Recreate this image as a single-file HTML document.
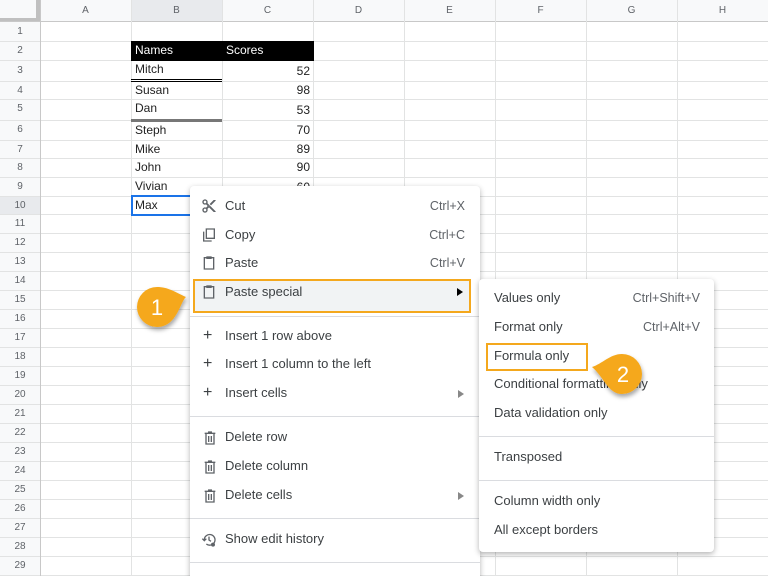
<!DOCTYPE html>
<html style="overflow:hidden;width:768px;height:576px"><head><meta charset="utf-8"><style>
*{margin:0;padding:0;box-sizing:border-box}
body{width:768px;height:576px;overflow:hidden;background:#fff;font-family:"Liberation Sans",Arial,sans-serif;position:relative}
.a{position:absolute}
.h{position:absolute;left:0;width:768px;height:1px;background:#e2e3e3}
.v{position:absolute;top:0;width:1px;height:576px;background:#e2e3e3}
.rh{position:absolute;left:0;width:40px;text-align:center;font-size:10px;color:#5f6368;height:19px;line-height:19px}
.ch{position:absolute;top:0;height:22px;line-height:22px;text-align:center;font-size:10px;color:#5f6368;width:91px}
.c{position:absolute;font-size:12px;color:#222;height:19px;line-height:19px}
.n{text-align:right;width:85px}
.m{position:absolute;background:#fff;box-shadow:0 2px 6px rgba(0,0,0,.3);border-radius:4px}
.it{position:absolute;font-size:13px;color:#3c4043;height:20px;line-height:20px}
.k{position:absolute;font-size:12.5px;color:#5f6368;text-align:right;height:20px;line-height:20px}
.sep{position:absolute;height:1px;background:#dadce0}
.ic{position:absolute;width:16px;height:16px}
</style></head><body>
<div class="a" style="left:0;top:0;width:768px;height:22px;background:#f8f9fa"></div>
<div class="a" style="left:0;top:0;width:40px;height:576px;background:#f8f9fa"></div>
<div class="a" style="left:131px;top:0;width:91px;height:22px;background:#e8eaed"></div>
<div class="a" style="left:0;top:196px;width:40px;height:18px;background:#e8eaed"></div>
<div class="a" style="left:0;top:0;width:40px;height:22px;background:#f8f9fa;border-right:4px solid #c0c0c0;border-bottom:4px solid #c0c0c0"></div>
<div class="h" style="top:21px;background:#c8c8c8"></div>
<div class="h" style="top:41px"></div><div class="h" style="top:60px"></div><div class="h" style="top:81px"></div><div class="h" style="top:99px"></div><div class="h" style="top:120px"></div><div class="h" style="top:140px"></div><div class="h" style="top:158px"></div><div class="h" style="top:177px"></div><div class="h" style="top:196px"></div><div class="h" style="top:214px"></div><div class="h" style="top:233px"></div><div class="h" style="top:252px"></div><div class="h" style="top:271px"></div><div class="h" style="top:290px"></div><div class="h" style="top:309px"></div><div class="h" style="top:328px"></div><div class="h" style="top:347px"></div><div class="h" style="top:366px"></div><div class="h" style="top:385px"></div><div class="h" style="top:404px"></div><div class="h" style="top:423px"></div><div class="h" style="top:442px"></div><div class="h" style="top:461px"></div><div class="h" style="top:480px"></div><div class="h" style="top:499px"></div><div class="h" style="top:518px"></div><div class="h" style="top:537px"></div><div class="h" style="top:556px"></div><div class="h" style="top:575px"></div>
<div class="v" style="left:40px;background:#c8c8c8"></div>
<div class="v" style="left:131px"></div><div class="v" style="left:222px"></div><div class="v" style="left:313px"></div><div class="v" style="left:404px"></div><div class="v" style="left:495px"></div><div class="v" style="left:586px"></div><div class="v" style="left:677px"></div>
<div class="ch" style="left:40px">A</div><div class="ch" style="left:131px">B</div><div class="ch" style="left:222px">C</div><div class="ch" style="left:313px">D</div><div class="ch" style="left:404px">E</div><div class="ch" style="left:495px">F</div><div class="ch" style="left:586px">G</div><div class="ch" style="left:677px">H</div>
<div class="rh" style="top:22px">1</div><div class="rh" style="top:41px">2</div><div class="rh" style="top:61px">3</div><div class="rh" style="top:81px">4</div><div class="rh" style="top:99px">5</div><div class="rh" style="top:120px">6</div><div class="rh" style="top:140px">7</div><div class="rh" style="top:158px">8</div><div class="rh" style="top:177px">9</div><div class="rh" style="top:196px">10</div><div class="rh" style="top:214px">11</div><div class="rh" style="top:233px">12</div><div class="rh" style="top:252px">13</div><div class="rh" style="top:271px">14</div><div class="rh" style="top:290px">15</div><div class="rh" style="top:309px">16</div><div class="rh" style="top:328px">17</div><div class="rh" style="top:347px">18</div><div class="rh" style="top:366px">19</div><div class="rh" style="top:385px">20</div><div class="rh" style="top:404px">21</div><div class="rh" style="top:423px">22</div><div class="rh" style="top:442px">23</div><div class="rh" style="top:461px">24</div><div class="rh" style="top:480px">25</div><div class="rh" style="top:499px">26</div><div class="rh" style="top:518px">27</div><div class="rh" style="top:537px">28</div><div class="rh" style="top:556px">29</div>
<div class="a" style="left:131px;top:41px;width:183px;height:20px;background:#000"></div>
<div class="c" style="left:135px;top:41px;color:#fff">Names</div>
<div class="c" style="left:226px;top:41px;color:#fff">Scores</div>
<div class="a" style="left:131px;top:79px;width:91px;height:1px;background:#000"></div>
<div class="a" style="left:131px;top:81px;width:91px;height:1px;background:#000"></div>
<div class="a" style="left:131px;top:119px;width:91px;height:3px;background:#777"></div>
<div class="c" style="left:135px;top:60px">Mitch</div><div class="c n" style="left:225px;top:62px">52</div>
<div class="c" style="left:135px;top:81px">Susan</div><div class="c n" style="left:225px;top:81px">98</div>
<div class="c" style="left:135px;top:99px">Dan</div><div class="c n" style="left:225px;top:101px">53</div>
<div class="c" style="left:135px;top:121px">Steph</div><div class="c n" style="left:225px;top:121px">70</div>
<div class="c" style="left:135px;top:140px">Mike</div><div class="c n" style="left:225px;top:140px">89</div>
<div class="c" style="left:135px;top:158px">John</div><div class="c n" style="left:225px;top:158px">90</div>
<div class="c" style="left:135px;top:177px">Vivian</div><div class="c n" style="left:225px;top:178px">60</div>
<div class="a" style="left:131px;top:195px;width:92px;height:21px;border:2px solid #1a73e8"></div>
<div class="c" style="left:135px;top:196px">Max</div>
<div class="m" style="left:190px;top:186px;width:290px;height:395px"></div>
<div class="a" style="left:193px;top:279px;width:278px;height:34px;background:#f1f3f4;border:2px solid #f4a81d"></div>
<svg class="ic" style="left:201px;top:198px" viewBox="0 0 24 24"><path fill="#5f6368" d="M9.64 7.64c.23-.5.36-1.05.36-1.64 0-2.210-1.79-4-4-4S2 3.79 2 6s1.79 4 4 4c.59 0 1.14-.13 1.640-.36L10 12l-2.36 2.36C7.14 14.13 6.59 14 6 14c-2.21 0-4 1.79-4 4s1.79 4 4 4 4-1.79 4-4c0-.59-.13-1.14-.36-1.64L12 14l7 7h3v-1L9.64 7.64zM6 8c-1.1 0-2-.89-2-2s.9-2 2-2 2 .89 2 2-.9 2-2 2zm0 12c-1.1 0-2-.89-2-2s.9-2 2-2 2 .89 2 2-.9 2-2 2zm6-7.5c-.28 0-.5-.22-.5-.5s.22-.5.5-.5.5.22.5.5-.22.5-.5.5zM19 3l-6 6 2 2 7-7V3h-3z"/></svg>
<div class="it" style="left:225px;top:196px">Cut</div><div class="k" style="left:380px;width:85px;top:196px">Ctrl+X</div>
<svg class="ic" style="left:201px;top:227px" viewBox="0 0 24 24"><path fill="none" stroke="#5f6368" stroke-width="2" d="M8 3h12v14H8zM4 7v14h12"/></svg>
<div class="it" style="left:225px;top:225px">Copy</div><div class="k" style="left:380px;width:85px;top:225px">Ctrl+C</div>
<svg class="ic" style="left:201px;top:255px" viewBox="0 0 24 24"><path fill="none" stroke="#5f6368" stroke-width="2" d="M5 4h14v17H5z"/><rect x="8" y="2" width="8" height="4" fill="#5f6368"/></svg>
<div class="it" style="left:225px;top:253px">Paste</div><div class="k" style="left:380px;width:85px;top:253px">Ctrl+V</div>
<svg class="ic" style="left:201px;top:284px" viewBox="0 0 24 24"><path fill="none" stroke="#5f6368" stroke-width="2" d="M5 4h14v17H5z"/><rect x="8" y="2" width="8" height="4" fill="#5f6368"/></svg>
<div class="it" style="left:225px;top:282px">Paste special</div>
<div class="a" style="left:457px;top:288px;width:0;height:0;border-left:6px solid #000;border-top:4px solid transparent;border-bottom:4px solid transparent"></div>
<div class="sep" style="left:190px;top:316px;width:290px"></div>
<div class="it" style="left:203px;top:326px;font-size:16px">+</div><div class="it" style="left:225px;top:326px">Insert 1 row above</div>
<div class="it" style="left:203px;top:354px;font-size:16px">+</div><div class="it" style="left:225px;top:354px">Insert 1 column to the left</div>
<div class="it" style="left:203px;top:383px;font-size:16px">+</div><div class="it" style="left:225px;top:383px">Insert cells</div>
<div class="a" style="left:458px;top:390px;width:0;height:0;border-left:6px solid #888;border-top:4px solid transparent;border-bottom:4px solid transparent"></div>
<div class="sep" style="left:190px;top:416px;width:290px"></div>
<svg class="ic" style="left:202px;top:430px" viewBox="0 0 24 24"><path fill="none" stroke="#5f6368" stroke-width="2" d="M4 5h16M9 3h6M6 5v16h12V5M10 9v9M14 9v9"/></svg>
<div class="it" style="left:225px;top:427px">Delete row</div>
<svg class="ic" style="left:202px;top:459px" viewBox="0 0 24 24"><path fill="none" stroke="#5f6368" stroke-width="2" d="M4 5h16M9 3h6M6 5v16h12V5M10 9v9M14 9v9"/></svg>
<div class="it" style="left:225px;top:456px">Delete column</div>
<svg class="ic" style="left:202px;top:488px" viewBox="0 0 24 24"><path fill="none" stroke="#5f6368" stroke-width="2" d="M4 5h16M9 3h6M6 5v16h12V5M10 9v9M14 9v9"/></svg>
<div class="it" style="left:225px;top:485px">Delete cells</div>
<div class="a" style="left:458px;top:492px;width:0;height:0;border-left:6px solid #888;border-top:4px solid transparent;border-bottom:4px solid transparent"></div>
<div class="sep" style="left:190px;top:518px;width:290px"></div>
<svg class="ic" style="left:201px;top:532px" viewBox="0 0 24 24"><path fill="none" stroke="#5f6368" stroke-width="2" d="M5 12a8 8 0 1 1 3 6M2 10l3 3 3-3M12 7v5l3 2"/><circle cx="18" cy="19" r="3" fill="#5f6368"/></svg>
<div class="it" style="left:225px;top:529px">Show edit history</div>
<div class="sep" style="left:190px;top:562px;width:290px"></div>
<div class="m" style="left:479px;top:279px;width:235px;height:273px"></div>
<div class="it" style="left:494px;top:288px">Values only</div><div class="k" style="left:600px;width:100px;top:288px">Ctrl+Shift+V</div>
<div class="it" style="left:494px;top:317px">Format only</div><div class="k" style="left:600px;width:100px;top:317px">Ctrl+Alt+V</div>
<div class="a" style="left:486px;top:343px;width:102px;height:28px;border:2px solid #f4a81d"></div>
<div class="it" style="left:494px;top:346px">Formula only</div>
<div class="it" style="left:494px;top:374px">Conditional formatting only</div>
<div class="it" style="left:494px;top:403px">Data validation only</div>
<div class="sep" style="left:479px;top:436px;width:235px"></div>
<div class="it" style="left:494px;top:447px">Transposed</div>
<div class="sep" style="left:479px;top:480px;width:235px"></div>
<div class="it" style="left:494px;top:491px">Column width only</div>
<div class="it" style="left:494px;top:520px">All except borders</div>
<svg class="a" style="left:130px;top:280px" width="70" height="60" viewBox="0 0 70 60"><defs><filter id="s" x="-30%" y="-30%" width="160%" height="160%"><feDropShadow dx="1" dy="3" stdDeviation="2" flood-opacity=".35"/></filter></defs><path filter="url(#s)" fill="#f5a81c" d="M27 7C38 7 45 12 56 17C50 22 47 47 27 47A20 20 0 0 1 27 7Z"/><text x="27" y="35" font-size="22" fill="#fff" font-family="Liberation Sans,sans-serif" text-anchor="middle">1</text></svg>
<svg class="a" style="left:580px;top:345px" width="70" height="60" viewBox="0 0 70 60"><path filter="url(#s)" fill="#f5a81c" d="M42 9A20 20 0 0 1 42 49C28 49 24 32 12 22C22 19 30 9 42 9Z"/><text x="43" y="37" font-size="22" fill="#fff" font-family="Liberation Sans,sans-serif" text-anchor="middle">2</text></svg>
</body></html>
